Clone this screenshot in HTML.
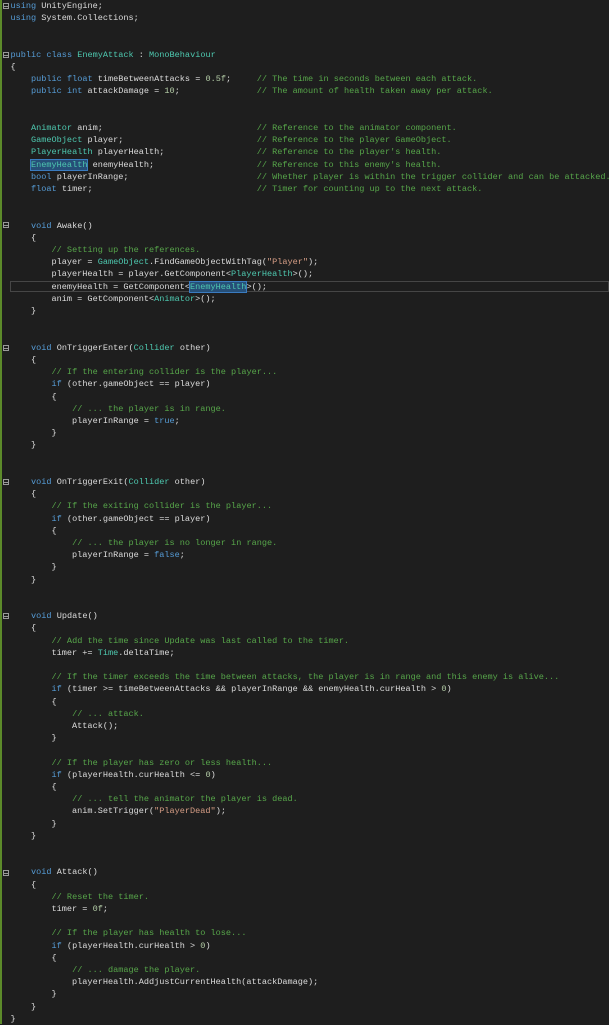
<!DOCTYPE html>
<html><head><meta charset="utf-8"><style>
html,body{margin:0;padding:0;background:#1e1e1e;width:609px;height:1024px;overflow:hidden}
.bar{position:absolute;left:0;top:0;width:2px;height:1024px;background:#5c8a2a}
pre{position:absolute;left:10.5px;top:0;margin:0;font-family:"Liberation Mono",monospace;font-size:8.55px;line-height:12.2px;color:#dcdcdc;white-space:pre}
.k{color:#569cd6}.t{color:#4ec9b0}.c{color:#57a64a}.s{color:#d69d85}.n{color:#b5cea8}
.hl{background:#264f78;outline:1px solid #3a7bbf}
.cur{position:absolute;left:10px;top:280.6px;width:599px;height:11px;border:1px solid #464646;box-sizing:border-box}
.f{position:absolute;left:3px;width:6px;height:6px;border:1px solid #9a9a9a;box-sizing:border-box}
.f:after{content:"";position:absolute;left:0;top:2px;width:4px;height:1px;background:#9a9a9a}
</style></head><body>
<div class="bar"></div>
<div class="cur"></div>
<div class="f" style="top:3px"></div>
<div class="f" style="top:52px"></div>
<div class="f" style="top:222px"></div>
<div class="f" style="top:345px"></div>
<div class="f" style="top:479px"></div>
<div class="f" style="top:613px"></div>
<div class="f" style="top:870px"></div>
<pre><span class="k">using</span> UnityEngine;
<span class="k">using</span> System.Collections;


<span class="k">public</span> <span class="k">class</span> <span class="t">EnemyAttack</span> : <span class="t">MonoBehaviour</span>
{
    <span class="k">public</span> <span class="k">float</span> timeBetweenAttacks = <span class="n">0.5f</span>;     <span class="c">// The time in seconds between each attack.</span>
    <span class="k">public</span> <span class="k">int</span> attackDamage = <span class="n">10</span>;               <span class="c">// The amount of health taken away per attack.</span>


    <span class="t">Animator</span> anim;                              <span class="c">// Reference to the animator component.</span>
    <span class="t">GameObject</span> player;                          <span class="c">// Reference to the player GameObject.</span>
    <span class="t">PlayerHealth</span> playerHealth;                  <span class="c">// Reference to the player's health.</span>
    <span class="t hl">EnemyHealth</span> enemyHealth;                    <span class="c">// Reference to this enemy's health.</span>
    <span class="k">bool</span> playerInRange;                         <span class="c">// Whether player is within the trigger collider and can be attacked.</span>
    <span class="k">float</span> timer;                                <span class="c">// Timer for counting up to the next attack.</span>


    <span class="k">void</span> Awake()
    {
        <span class="c">// Setting up the references.</span>
        player = <span class="t">GameObject</span>.FindGameObjectWithTag(<span class="s">"Player"</span>);
        playerHealth = player.GetComponent&lt;<span class="t">PlayerHealth</span>&gt;();
        enemyHealth = GetComponent&lt;<span class="t hl">EnemyHealth</span>&gt;();
        anim = GetComponent&lt;<span class="t">Animator</span>&gt;();
    }


    <span class="k">void</span> OnTriggerEnter(<span class="t">Collider</span> other)
    {
        <span class="c">// If the entering collider is the player...</span>
        <span class="k">if</span> (other.gameObject == player)
        {
            <span class="c">// ... the player is in range.</span>
            playerInRange = <span class="k">true</span>;
        }
    }


    <span class="k">void</span> OnTriggerExit(<span class="t">Collider</span> other)
    {
        <span class="c">// If the exiting collider is the player...</span>
        <span class="k">if</span> (other.gameObject == player)
        {
            <span class="c">// ... the player is no longer in range.</span>
            playerInRange = <span class="k">false</span>;
        }
    }


    <span class="k">void</span> Update()
    {
        <span class="c">// Add the time since Update was last called to the timer.</span>
        timer += <span class="t">Time</span>.deltaTime;

        <span class="c">// If the timer exceeds the time between attacks, the player is in range and this enemy is alive...</span>
        <span class="k">if</span> (timer &gt;= timeBetweenAttacks &amp;&amp; playerInRange &amp;&amp; enemyHealth.curHealth &gt; <span class="n">0</span>)
        {
            <span class="c">// ... attack.</span>
            Attack();
        }

        <span class="c">// If the player has zero or less health...</span>
        <span class="k">if</span> (playerHealth.curHealth &lt;= <span class="n">0</span>)
        {
            <span class="c">// ... tell the animator the player is dead.</span>
            anim.SetTrigger(<span class="s">"PlayerDead"</span>);
        }
    }


    <span class="k">void</span> Attack()
    {
        <span class="c">// Reset the timer.</span>
        timer = <span class="n">0f</span>;

        <span class="c">// If the player has health to lose...</span>
        <span class="k">if</span> (playerHealth.curHealth &gt; <span class="n">0</span>)
        {
            <span class="c">// ... damage the player.</span>
            playerHealth.AddjustCurrentHealth(attackDamage);
        }
    }
}</pre>
</body></html>
